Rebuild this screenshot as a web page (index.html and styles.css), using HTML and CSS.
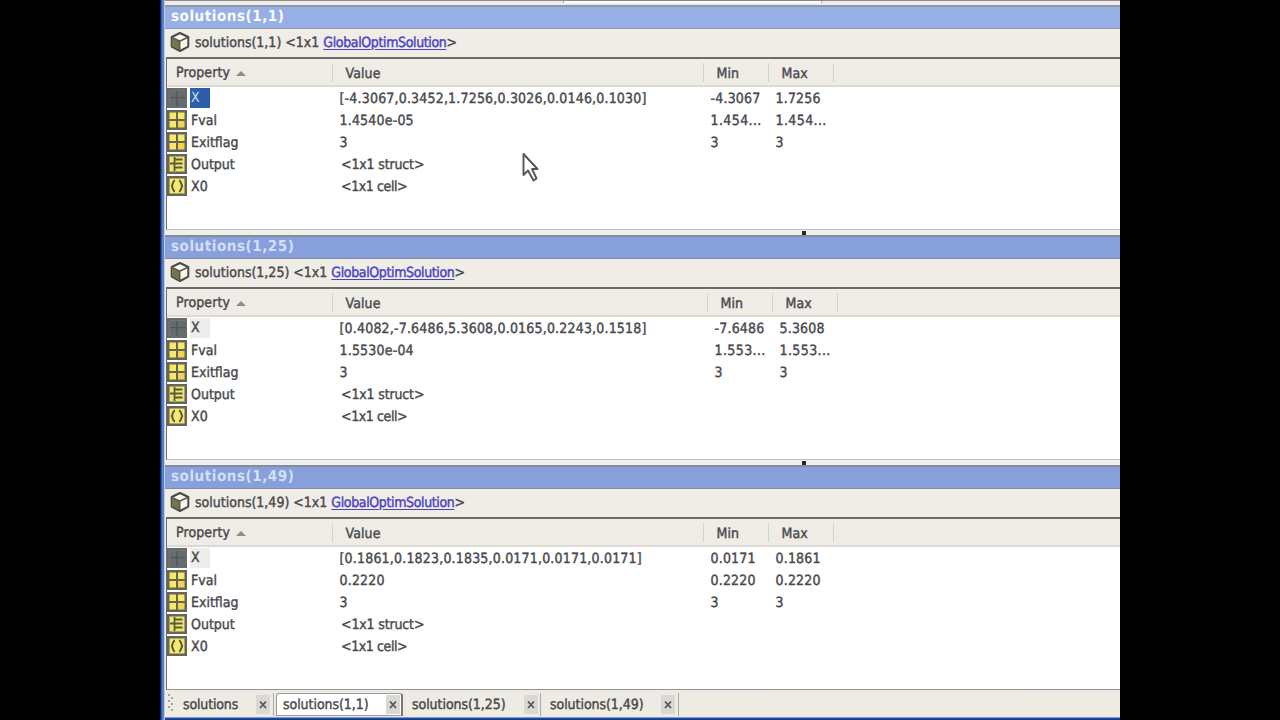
FILE: index.html
```
<!DOCTYPE html>
<html lang="en">
<head>
<meta charset="utf-8">
<title>Variable Editor</title>
<link rel="stylesheet" href="styles.css">
</head>
<body>
<svg class="defs" aria-hidden="true">
  <symbol id="cube" viewBox="0 0 20 20">
    <path d="M10 1 18.3 5V14.6L10 19 1.7 14.6V5Z" fill="#f6f6ed" stroke="#4b4b45" stroke-width="2" stroke-linejoin="round"/>
    <path d="M2.3 5.7 9.4 9.2V18L2.3 14.2Z" fill="#76744a"/>
    <path d="M2 5.3 9.7 9.1 18 5.3M9.7 9.1V18.5" fill="none" stroke="#55554b" stroke-width="1.5"/>
  </symbol>
  <symbol id="matrix" viewBox="0 0 20 20">
    <rect width="20" height="20" fill="#65655b"/>
    <path d="M2.5 2.5h6.5v6.5h-6.5zM11 2.5h6.5v6.5H11zM2.5 11h6.5v6.5h-6.5z" fill="#f8e965"/>
    <path d="M11 11h6.5v6.5H11z" fill="#f3d44a"/>
  </symbol>
  <symbol id="matrix-dark" viewBox="0 0 20 20">
    <rect width="20" height="20" fill="#666b6e"/>
    <path d="M3 9.7H18M9.8 3V18" stroke="#4f5458" stroke-width="1.2"/>
    <path d="M3 2.5h15M2.5 3v15" stroke="#72777a"/>
  </symbol>
  <symbol id="struct" viewBox="0 0 20 20">
    <rect width="20" height="20" fill="#65655b"/>
    <path d="M2.5 2.5h15v15h-15z" fill="#f3e66e"/>
    <path d="M7.500 3v14M3 9.5h4M8 5.500h7.500M8 9.500h7.500M8 13.500h7.500" fill="none" stroke="#5c5a3a" stroke-width="1.800"/>
  </symbol>
  <symbol id="cell" viewBox="0 0 20 20">
    <rect width="20" height="20" fill="#65655b"/>
    <path d="M2.5 2.5h15v15h-15z" fill="#f5ea70"/>
    <path d="M8 4.500C5.500 5 6 8.500 4.800 10C6 11.500 5.500 15 8 15.500M12 4.500C14.500 5 14 8.500 15.200 10C14 11.500 14.500 15 12 15.500" fill="none" stroke="#5c5a3a" stroke-width="2"/>
  </symbol>
</svg>
<div class="window">
  <div class="edge"></div>
  <main class="content">
    <div class="top-strip"><i></i></div>

    <section class="panel focused">
      <h2 class="title">solutions(1,1)</h2>
      <div class="info"><svg class="cube"><use href="#cube"/></svg><span>solutions(1,1) &lt;1x1 <a>GlobalOptimSolution</a>&gt;</span></div>
      <div class="table">
        <div class="row head"><span>Property<b class="sort"></b></span><span>Value</span><span>Min</span><span>Max</span></div>
        <div class="row"><span class="name"><svg><use href="#matrix-dark"/></svg><em class="selected">X</em></span><span class="num">[-4.3067,0.3452,1.7256,0.3026,0.0146,0.1030]</span><span class="num">-4.3067</span><span class="num">1.7256</span></div>
        <div class="row"><span class="name"><svg><use href="#matrix"/></svg><span>Fval</span></span><span class="num">1.4540e-05</span><span class="num dots">1.454...</span><span class="num dots">1.454...</span></div>
        <div class="row"><span class="name"><svg><use href="#matrix"/></svg><span>Exitflag</span></span><span class="num">3</span><span class="num">3</span><span class="num">3</span></div>
        <div class="row"><span class="name"><svg><use href="#struct"/></svg><span>Output</span></span><span class="type">&lt;1x1 struct&gt;</span></div>
        <div class="row"><span class="name"><svg><use href="#cell"/></svg><span>X0</span></span><span class="type cell">&lt;1x1 cell&gt;</span></div>
      </div>
      <div class="splitter"><i></i></div>
    </section>

    <section class="panel wide-value">
      <h2 class="title">solutions(1,25)</h2>
      <div class="info"><svg class="cube"><use href="#cube"/></svg><span>solutions(1,25) &lt;1x1 <a>GlobalOptimSolution</a>&gt;</span></div>
      <div class="table">
        <div class="row head"><span>Property<b class="sort"></b></span><span>Value</span><span>Min</span><span>Max</span></div>
        <div class="row"><span class="name"><svg><use href="#matrix-dark"/></svg><em>X</em></span><span class="num">[0.4082,-7.6486,5.3608,0.0165,0.2243,0.1518]</span><span class="num">-7.6486</span><span class="num">5.3608</span></div>
        <div class="row"><span class="name"><svg><use href="#matrix"/></svg><span>Fval</span></span><span class="num">1.5530e-04</span><span class="num dots">1.553...</span><span class="num dots">1.553...</span></div>
        <div class="row"><span class="name"><svg><use href="#matrix"/></svg><span>Exitflag</span></span><span class="num">3</span><span class="num">3</span><span class="num">3</span></div>
        <div class="row"><span class="name"><svg><use href="#struct"/></svg><span>Output</span></span><span class="type">&lt;1x1 struct&gt;</span></div>
        <div class="row"><span class="name"><svg><use href="#cell"/></svg><span>X0</span></span><span class="type cell">&lt;1x1 cell&gt;</span></div>
      </div>
      <div class="splitter"><i></i></div>
    </section>

    <section class="panel last">
      <h2 class="title">solutions(1,49)</h2>
      <div class="info"><svg class="cube"><use href="#cube"/></svg><span>solutions(1,49) &lt;1x1 <a>GlobalOptimSolution</a>&gt;</span></div>
      <div class="table">
        <div class="row head"><span>Property<b class="sort"></b></span><span>Value</span><span>Min</span><span>Max</span></div>
        <div class="row"><span class="name"><svg><use href="#matrix-dark"/></svg><em>X</em></span><span class="num">[0.1861,0.1823,0.1835,0.0171,0.0171,0.0171]</span><span class="num">0.0171</span><span class="num">0.1861</span></div>
        <div class="row"><span class="name"><svg><use href="#matrix"/></svg><span>Fval</span></span><span class="num">0.2220</span><span class="num">0.2220</span><span class="num">0.2220</span></div>
        <div class="row"><span class="name"><svg><use href="#matrix"/></svg><span>Exitflag</span></span><span class="num">3</span><span class="num">3</span><span class="num">3</span></div>
        <div class="row"><span class="name"><svg><use href="#struct"/></svg><span>Output</span></span><span class="type">&lt;1x1 struct&gt;</span></div>
        <div class="row"><span class="name"><svg><use href="#cell"/></svg><span>X0</span></span><span class="type cell">&lt;1x1 cell&gt;</span></div>
      </div>
    </section>

    <nav class="tabs">
      <svg class="grip" viewBox="0 0 8 20"><path d="M1 1h2v2H1zM4 4h2v2H4zM1 7h2v2H1zM4 10h2v2H4zM1 13h2v2H1zM4 16h2v2H4z" fill="#a3a39d"/></svg>
      <div class="tab t1"><span>solutions</span><svg class="close" viewBox="0 0 14 18"><path d="M4 6 10 12.500M10 6 4 12.500"/></svg></div>
      <div class="tab t2 active"><span>solutions(1,1)</span><svg class="close" viewBox="0 0 14 18"><path d="M4 6 10 12.500M10 6 4 12.500"/></svg></div>
      <div class="tab t3"><span>solutions(1,25)</span><svg class="close" viewBox="0 0 14 18"><path d="M4 6 10 12.500M10 6 4 12.500"/></svg></div>
      <div class="tab t4"><span>solutions(1,49)</span><svg class="close" viewBox="0 0 14 18"><path d="M4 6 10 12.500M10 6 4 12.500"/></svg></div>
    </nav>
    <div class="bottom-edge"></div>
  </main>
</div>
<svg class="pointer" viewBox="0 0 20 32"><path d="M2.500 2V23L7 18.500 12.500 28.500 15.500 26.500 11 17H16.500Z" fill="#fff" stroke="#55555c" stroke-width="1.900" stroke-linejoin="round"/></svg>
</body>
</html>
```
FILE: styles.css
```
* { box-sizing: border-box; }
body {
  margin: 0;
  width: 1280px;
  height: 720px;
  overflow: hidden;
  background: #000;
  color: #49494d;
  font: 14px/22px "DejaVu Sans Condensed", "DejaVu Sans", sans-serif;
  font-stretch: condensed;
  text-rendering: geometricPrecision;
  -webkit-text-stroke: 0.4px currentColor;
}
.defs { position: absolute; width: 0; height: 0; }
.window { display: flex; width: 960px; height: 720px; margin-left: 160px; }
.edge {
  width: 5px;
  background: linear-gradient(90deg, #16254d 0 1px, #2f5bb5 1px 2px, #5580d0 2px 4px, #c3cbdc 4px);
}
.content { flex: 1; min-width: 0; display: flex; flex-direction: column; background: #efede6; }
.content > * { flex-shrink: 0; }
.top-strip { height: 5px; border-top: 1px solid #8d8986; padding-left: 398px; background: #efede9; }
.top-strip i { display: block; width: 259px; height: 2px; background: #fff; border: solid #aaa; border-width: 0 1px; }
.panel { height: 230px; display: flex; flex-direction: column; }
.panel.last { height: 225px; }
.title {
  margin: 0;
  height: 24px;
  padding-left: 6px;
  border: solid #858b9c;
  border-width: 2px 0 1px;
  background: #879fda;
  color: #d3dff8;
  font: bold 15px/19px "DejaVu Sans Condensed", "DejaVu Sans", sans-serif;
  font-stretch: condensed;
  letter-spacing: 0.55px;
  -webkit-text-stroke: 0;
}
.focused .title { background: #96afe4; color: #fbfcff; border-color: #9098a6; }
.info { height: 28px; display: flex; align-items: center; padding-left: 5px; white-space: pre; }
.cube { width: 20px; height: 20px; margin: -2px 5px 0 0; }
.info a { color: #4b43c2; text-decoration: underline; text-underline-offset: 2px; letter-spacing: -0.37px; }
.table { flex: 1; min-height: 0; margin-left: 1px; border: solid #6b6b69; border-width: 2px 0 1px 1px; border-bottom-color: #bbc0c8; background: #fff; }
.last .table { border-bottom-color: #96938f; }
.row { height: 22px; line-height: 20px; display: grid; grid-template-columns: 166px 371px 65px 65px 1fr; align-items: center; white-space: pre; }
.wide-value .row { grid-template-columns: 166px 375px 65px 65px 1fr; }
.row > span { padding: 2px 0 0 6.5px; }
.row .num { letter-spacing: 0.19px; }
.row .dots { letter-spacing: 0.4px; }
.row .name { display: flex; align-items: center; gap: 4px; padding: 0; }
.name span { padding-top: 2px; }
.name svg { width: 20px; height: 20px; }
.name em { width: 20px; height: 20px; line-height: 21px; margin-left: -1px; padding-left: 1px; font-style: normal; background: #eeedeb; }
.name em.selected { background: #2c5da8; color: #c8dbf5; -webkit-text-stroke: 0; }
.row .type { padding-left: 8px; letter-spacing: -0.15px; }
.row .cell { letter-spacing: -0.4px; }
.row.head { height: 28px; border-bottom: 2px solid #dcdad2; background: linear-gradient(#efede6, #eeece4); letter-spacing: 0.1px; }
.row.head > span { padding: 1px 0 0 12.5px; border-right: 1px solid #d5d3cb; height: 19px; line-height: 20px; }
.row.head > span:first-child { padding: 2px 0 0 9px; display: flex; align-items: center; }
.sort { margin-left: 6px; border: solid transparent; border-width: 0 5px 5px; border-bottom-color: #8e8e89; }
.splitter { height: 5px; padding: 1px 0 0 637px; background: #f1efe9; }
.splitter i { display: block; width: 4px; height: 4px; background: #26262a; }
.tabs { display: flex; height: 27px; padding: 3px 0 1px 2px; background: linear-gradient(#eceae6, #f0eddf); }
.grip { width: 8px; height: 20px; }
.tab { display: flex; align-items: center; justify-content: space-between; height: 23px; border-right: 1px solid #aaa9a4; letter-spacing: -0.05px; white-space: pre; }
.t1 { width: 99px; padding: 0 3px 0 8px; letter-spacing: -0.15px; }
.t2 { width: 127px; margin-left: 2px; padding: 0 1px 0 6px; }
.t3 { width: 138px; padding: 0 2px 0 9px; }
.t4 { width: 138px; padding: 0 3px 0 9px; }
.tab.active { background: #fff; border: 1px solid #99999a; border-right: 2px solid #77777a; border-radius: 3px 3px 0 0; }
.close { width: 14px; height: 19px; background: #d9d8d3; fill: none; stroke: #55555a; stroke-width: 1.8; }
.bottom-edge { height: 3px; background: linear-gradient(#7699dc 0 1px, #1f4ba6 1px 2px, #173b88 2px); }
.pointer { position: absolute; left: 521px; top: 152px; width: 20px; height: 32px; }
```
